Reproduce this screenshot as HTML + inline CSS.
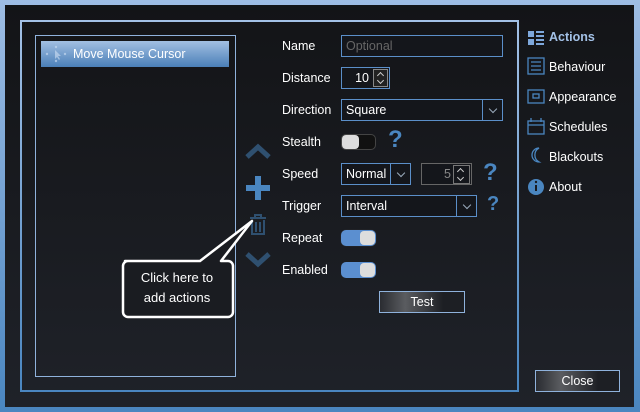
<!DOCTYPE html>
<html><head><style>
*{margin:0;padding:0;box-sizing:border-box}
body{width:640px;height:412px;overflow:hidden;background:linear-gradient(#9ebde4,#4a86c0);font-family:"Segoe UI","Liberation Sans",sans-serif;font-size:12px;color:#fff;position:relative}
.abs{position:absolute}
#win{left:5px;top:5px;width:629px;height:402px;background:linear-gradient(#131417,#1f2229)}
#panel{left:20px;top:20px;width:499px;height:372px;border:2px solid;border-image:linear-gradient(#a3c1e6,#4a86c0) 1;}
#list{left:35px;top:35px;width:201px;height:342px;border:1px solid #8fb2dc}
#sel{left:41px;top:41px;width:188px;height:26px;background:linear-gradient(#a2bfe2,#4a7fb8);padding-left:32px;line-height:26px;font-size:12.5px}
.lbl{left:282px;font-size:12.5px}
.box{border:1px solid #5b8fc9;background:#14161b;height:22px;line-height:20px;padding-left:4px;font-size:12.5px}
.dd{border-left:1px solid #5b8fc9;position:absolute;right:0;top:0;width:20px;height:20px}
.dd::after{content:"";position:absolute;left:7px;top:6px;width:5px;height:5px;border-right:1.3px solid #9ab;border-bottom:1.3px solid #9ab;transform:rotate(45deg)}
.tog{width:35px;height:16px;border-radius:5px}
.help{color:#4a86c0;font-weight:bold;font-family:"Liberation Sans",sans-serif}
.nav{left:529px;font-size:12.5px}
.btn{border:1px solid #8fb2dc;background:linear-gradient(90deg,#2a2c31,#5a5c60 30%,#3a3c40 55%,#1d1f24 75%);text-align:center;line-height:20px;font-size:12.5px}
.spin{position:absolute;border:1px solid #888;background:#222}
.spin::before,.spin::after{content:"";position:absolute;left:4px;width:4px;height:4px;border-left:1.3px solid #ccc;border-top:1.3px solid #ccc}
.spin::before{top:3px;transform:rotate(45deg)}
.spin::after{bottom:3px;transform:rotate(225deg)}
</style></head><body>
<div id="win" class="abs"></div>
<div id="panel" class="abs"></div>
<div id="list" class="abs"></div>
<div id="sel" class="abs">Move Mouse Cursor</div>
<svg class="abs" style="left:44px;top:44px" width="24" height="20"><g fill="#d0e0f4" opacity=".6"><circle cx="12" cy="3" r="1.2"/><circle cx="12" cy="17" r="1.2"/><circle cx="3" cy="10" r="1.2"/><circle cx="21" cy="10" r="1.2"/><path d="M11 6v9l2-2 2 3 1-1-2-3h3z"/></g></svg>

<div class="abs lbl" style="top:39px">Name</div>
<div class="abs box" style="left:341px;top:35px;width:162px;color:#666">Optional</div>
<div class="abs lbl" style="top:71px">Distance</div>
<div class="abs box" style="left:341px;top:67px;width:49px;text-align:right;padding-right:20px">10</div>
<div class="spin" style="left:373px;top:69px;width:15px;height:18px"></div>
<div class="abs lbl" style="top:103px">Direction</div>
<div class="abs box" style="left:341px;top:99px;width:162px">Square<div class="dd"></div></div>
<div class="abs lbl" style="top:135px">Stealth</div>
<div class="abs tog" style="left:341px;top:134px;border:1px solid #444;background:#111"><div style="width:17px;height:14px;background:#ddd;border-radius:4px"></div></div>
<div class="abs help" style="left:388px;top:126px;font-size:24px">?</div>
<div class="abs lbl" style="top:167px">Speed</div>
<div class="abs box" style="left:341px;top:163px;width:70px">Normal<div class="dd"></div></div>
<div class="abs box" style="left:421px;top:163px;width:51px;border-color:#666;color:#888;text-align:right;padding-right:20px">5</div>
<div class="spin" style="left:453px;top:165px;width:17px;height:19px;border-color:#777;background:none"></div>
<div class="abs help" style="left:483px;top:159px;font-size:24px">?</div>
<div class="abs lbl" style="top:199px">Trigger</div>
<div class="abs box" style="left:341px;top:195px;width:136px">Interval<div class="dd"></div></div>
<div class="abs help" style="left:487px;top:193px;font-size:20px">?</div>
<div class="abs lbl" style="top:231px">Repeat</div>
<div class="abs tog" style="left:341px;top:230px;background:#5b8fd0;box-shadow:0 0 1px #444"><div style="position:absolute;right:1px;top:1px;width:15px;height:14px;background:#ddd;border-radius:4px"></div></div>
<div class="abs lbl" style="top:263px">Enabled</div>
<div class="abs tog" style="left:341px;top:262px;background:#5b8fd0"><div style="position:absolute;right:1px;top:1px;width:15px;height:14px;background:#ddd;border-radius:4px"></div></div>
<div class="abs btn" style="left:379px;top:291px;width:86px;height:22px">Test</div>

<svg class="abs" style="left:244px;top:142px" width="30" height="130">
<path d="M3 15l11-10 11 10" stroke="#2f5070" stroke-width="5" fill="none"/>
<path d="M14 34v24M2 46h24" stroke="#4a86c0" stroke-width="6"/>
<g stroke="#2f5070" stroke-width="2" fill="none"><path d="M6 76h16M11 76v-3h6v3M8 78v14h12V78M12 80v10M16 80v10"/></g>
<path d="M3 112l11 10 11-10" stroke="#2f5070" stroke-width="5" fill="none"/>
</svg>

<svg class="abs" style="left:118px;top:218px" width="140" height="104">
<path d="M7 43H82L134 3 103 43H110a5 5 0 0 1 5 5v46a5 5 0 0 1-5 5H10a5 5 0 0 1-5-5V48a5 5 0 0 1 5-5z" fill="#1a1c21" stroke="#fff" stroke-width="2.5" stroke-linejoin="round"/>
</svg>
<div class="abs" style="left:128px;top:268px;width:98px;text-align:center;font-size:13px;line-height:20px">Click here to<br>add actions</div>

<svg class="abs" style="left:527px;top:30px" width="20" height="170">
<g fill="#7ea8dc"><rect x="1" y="1" width="6" height="6"/><rect x="1" y="9" width="6" height="6"/><rect x="9" y="1" width="8" height="2"/><rect x="9" y="5" width="8" height="2"/><rect x="9" y="9" width="8" height="2"/><rect x="9" y="13" width="8" height="2"/></g>
<g stroke="#4a86c0" stroke-width="1.3" fill="none"><rect x="1" y="28" width="16" height="16"/><path d="M4 32h10M4 36h10M4 40h10"/><rect x="1" y="60" width="16" height="13"/><rect x="6" y="64" width="6" height="4"/><rect x="1" y="91" width="16" height="13"/><path d="M1 95h16M4 88v4M14 88v4"/><path d="M12 118a7 7 0 1 0 0 14a8 8 0 0 1 0-14z"/></g>
<circle cx="9" cy="157" r="8" fill="#4a86c0"/><rect x="8" y="155" width="2" height="6" fill="#1a1c21"/><circle cx="9" cy="152" r="1.2" fill="#1a1c21"/>
</svg>
<div class="abs nav" style="left:549px;top:30px;font-weight:bold;color:#a3c1e6">Actions</div>
<div class="abs nav" style="left:549px;top:60px">Behaviour</div>
<div class="abs nav" style="left:549px;top:90px">Appearance</div>
<div class="abs nav" style="left:549px;top:120px">Schedules</div>
<div class="abs nav" style="left:549px;top:150px">Blackouts</div>
<div class="abs nav" style="left:549px;top:180px">About</div>
<div class="abs btn" style="left:535px;top:370px;width:85px;height:22px">Close</div>
</body></html>
